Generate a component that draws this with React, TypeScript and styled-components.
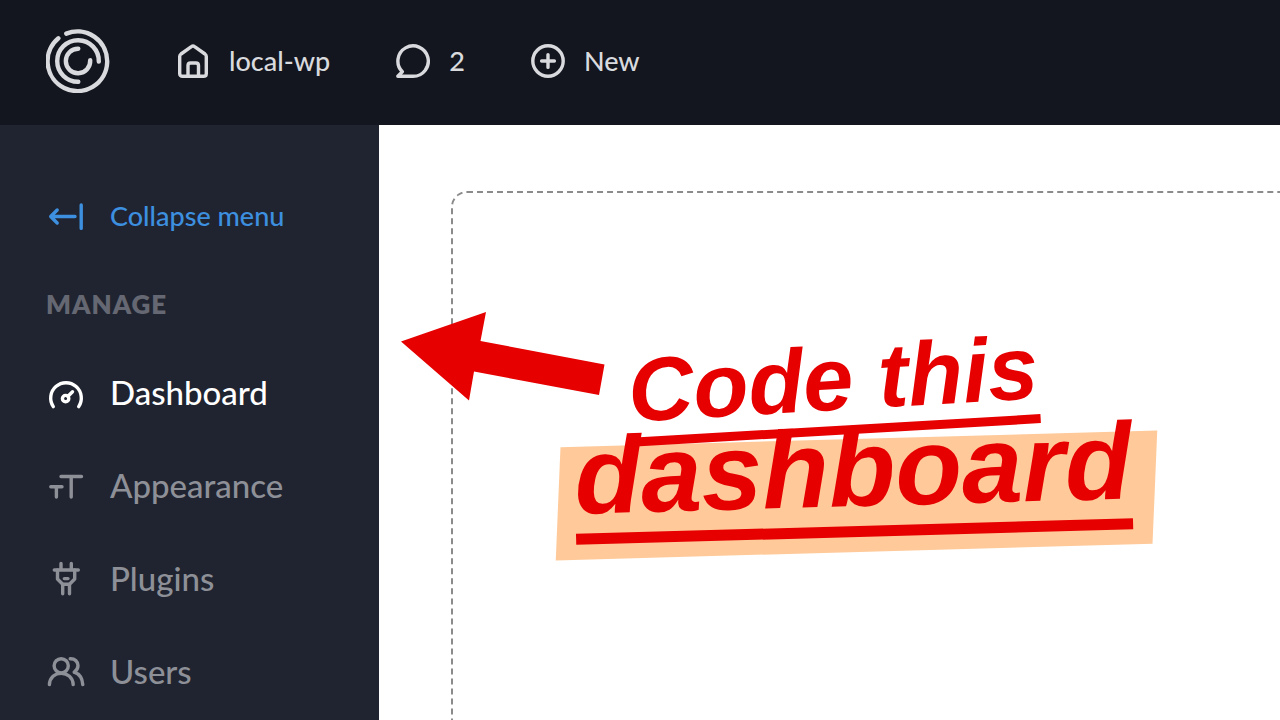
import React from "react";
import styled, { createGlobalStyle } from "styled-components";

const GlobalStyle = createGlobalStyle`
  * { box-sizing: border-box; }
  body {
    margin: 0;
    background: #ffffff;
    font-family: Lato, "Liberation Sans", sans-serif;
    font-weight: 500;
  }
`;

const Page = styled.div`
  min-height: 100vh;
  display: flex;
  flex-direction: column;
  overflow: hidden;
`;

const Toolbar = styled.header`
  display: flex;
  align-items: center;
  gap: 65px;
  padding: 29px 46px 32px;
  background: #13161e;
  color: #d9dade;
`;

const ToolbarLink = styled.a`
  display: flex;
  align-items: center;
  gap: 18px;
  color: inherit;
  text-decoration: none;
  font-size: 27px;
  line-height: 36px;
  white-space: nowrap;
`;

const Body = styled.div`
  flex: 1;
  display: flex;
`;

const Sidebar = styled.nav`
  flex: 0 0 379px;
  padding: 44px 0 0;
  background: #202430;
`;

const rowLayout = `
  display: flex;
  align-items: center;
  gap: 24px;
  width: 100%;
  height: 93px;
  padding: 0 46px;
  font-weight: 500;
  white-space: nowrap;
`;

const CollapseButton = styled.button`
  ${rowLayout}
  border: 0;
  background: none;
  color: #3d8fe0;
  font-family: inherit;
  font-size: 27px;
  cursor: pointer;
`;

const SectionTitle = styled.h2`
  margin: 0;
  padding: 0 46px;
  font-size: 26px;
  line-height: 84px;
  font-weight: 800;
  letter-spacing: 1px;
  text-transform: uppercase;
  color: #656872;
`;

const MenuList = styled.ul`
  margin: 0;
  padding: 0;
  list-style: none;
`;

const MenuLink = styled.a<{ $active?: boolean }>`
  ${rowLayout}
  color: ${(p) => (p.$active ? "#ffffff" : "#8e9098")};
  font-size: 33px;
  text-decoration: none;
`;

const MenuLabel = styled.span`
  padding-bottom: 2px;
`;

const Main = styled.main`
  position: relative;
  flex: 1;
  min-width: 0;
  display: flex;
  padding: 66px 0 0 72px;
`;

const Panel = styled.section`
  flex: 1;
  margin: 0 -40px -40px 0;
  border: 2px dashed #8b8b8b;
  border-radius: 16px;
`;

const Note = styled.p`
  position: absolute;
  margin: 0;
  color: #e60000;
  font-family: "Liberation Sans", Arial, sans-serif;
  font-weight: 700;
  font-style: italic;
  text-decoration: underline;
  text-decoration-skip-ink: none;
  white-space: nowrap;
`;

const NoteTop = styled(Note)`
  z-index: 2;
  top: 210px;
  left: 249px;
  font-size: 90px;
  line-height: 88px;
  text-decoration-thickness: 9px;
  text-underline-offset: 16px;
  transform: rotate(-3.3deg);
`;

const NoteHighlight = styled(Note)`
  z-index: 1;
  top: 314px;
  left: 179px;
  height: 113px;
  padding: 0 23px 0 17px;
  font-size: 109px;
  line-height: 58px;
  text-decoration-thickness: 11px;
  text-underline-offset: 20px;
  transform: rotate(-1.6deg);

  &::before {
    content: "";
    position: absolute;
    inset: 0;
    z-index: -1;
    background: #ffc999;
    transform: skewX(-4deg);
  }
`;

const Arrow = styled.svg`
  position: absolute;
  top: 186px;
  left: 21px;
`;

const Glyph = styled.svg<{ $stroke?: number }>`
  flex: none;
  fill: none;
  stroke: currentColor;
  stroke-width: ${(p) => p.$stroke ?? 3.4};
  stroke-linecap: round;
  stroke-linejoin: round;
`;

function Icon({ size, children }: { size: number; children: React.ReactNode }) {
  return (
    <Glyph width={size} height={size} viewBox={`0 0 ${size} ${size}`} aria-hidden="true">
      {children}
    </Glyph>
  );
}

const menu = [
  {
    label: "Dashboard",
    active: true,
    icon: (
      <>
        <path d="M7.3 33.6A15.3 15.3 0 1 1 32.7 33.6" />
        <circle cx="19.6" cy="25.6" r="3.2" />
        <path d="M22 23.2L26.5 18.8" />
      </>
    ),
  },
  {
    label: "Appearance",
    icon: (
      <>
        <path d="M15 10.5H35.5M25.2 10.5V31" />
        <path d="M4.8 20.8H16M10.4 20.8V31" />
      </>
    ),
  },
  {
    label: "Plugins",
    icon: (
      <>
        <path d="M15 4.5V11M25.3 4.5V11M8.3 11H32.3" />
        <path d="M11.5 11V20L16.7 25.3H23.5L28.7 20V11" />
        <path d="M16.7 25.3V34.8M23.5 25.3V34.8M18.3 19.6H22" />
      </>
    ),
  },
  {
    label: "Users",
    icon: (
      <>
        <circle cx="15.2" cy="13.8" r="7.1" />
        <path d="M3.4 32.6C3.8 25.5 8.8 21.4 15.2 21.4S26.8 25.5 27.2 32.6" />
        <path d="M24.2 6.8C28.8 6.6 32 9.6 32 13.6C32 16.8 30.6 18.6 28.2 20.2C33.4 22 36.4 26.8 36.8 32.6" />
      </>
    ),
  },
];

export default function App() {
  return (
    <Page>
      <GlobalStyle />
      <Toolbar>
        <Glyph $stroke={4.4} width="64" height="64" viewBox="0 0 64 64" role="img" aria-label="Logo">
          <path d="M20.3 4.6A29.8 29.8 0 1 1 12.4 9.3" />
          <path d="M52.8 32.6A20.8 20.8 0 1 0 32.3 52.8" />
          <path d="M32.3 19.8A12.2 12.2 0 1 0 44.2 31.2" />
        </Glyph>
        <ToolbarLink href="#site">
          <Icon size={36}>
            <path d="M4.7 13.6Q4.7 12 6 11L16.4 3.6Q18 2.4 19.6 3.6L30 11Q31.3 12 31.3 13.6V30.4Q31.3 33.3 28.4 33.3H7.6Q4.7 33.3 4.7 30.4Z" />
            <path d="M13 33.3V22.6Q13 20 15.6 20H20.9Q23.5 20 23.5 22.6V33.3" />
          </Icon>
          local-wp
        </ToolbarLink>
        <ToolbarLink href="#comments">
          <Icon size={36}>
            <path d="M18 33.3H2.8L7.3 28.8A15.2 15.2 0 1 1 18 33.3Z" />
          </Icon>
          2
        </ToolbarLink>
        <ToolbarLink href="#new">
          <Icon size={36}>
            <circle cx="18" cy="18" r="15.2" />
            <path d="M11.6 18H24.4M18 11.6V24.4" />
          </Icon>
          New
        </ToolbarLink>
      </Toolbar>
      <Body>
        <Sidebar aria-label="Admin menu">
          <CollapseButton type="button">
            <Icon size={40}>
              <path d="M29 20.5H5M11.2 14L4.7 20.5L11.2 27M35.2 9V32.4" />
            </Icon>
            Collapse menu
          </CollapseButton>
          <SectionTitle>Manage</SectionTitle>
          <MenuList>
            {menu.map((item) => (
              <li key={item.label}>
                <MenuLink href={`#${item.label.toLowerCase()}`} $active={item.active}>
                  <Icon size={40}>{item.icon}</Icon>
                  <MenuLabel>{item.label}</MenuLabel>
                </MenuLink>
              </li>
            ))}
          </MenuList>
        </Sidebar>
        <Main>
          <Panel />
          <Arrow width="206" height="92" viewBox="0 0 206 92" fill="#e60000" aria-hidden="true">
            <path d="M1 30.5L86 1L80.5 30L204.5 53.5L199 84L74 60.5L69 89.5Z" />
          </Arrow>
          <NoteTop>Code this</NoteTop>
          <NoteHighlight>dashboard</NoteHighlight>
        </Main>
      </Body>
    </Page>
  );
}
